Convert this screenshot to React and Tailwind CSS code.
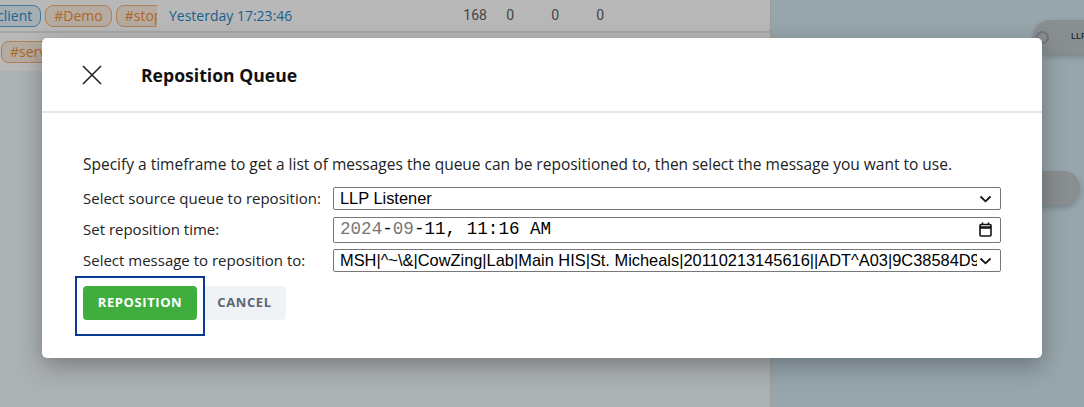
import React from 'react';

const Tag = ({ label, tone }) => (
  <span
    className={`h-[22px] px-[8px] flex items-center rounded-[8px] border text-[14px] leading-none shrink-0 ${
      tone === 'blue'
        ? 'border-[#5aa9d6] text-[#2b8ccc] bg-[#e3f1f9]'
        : 'border-[#f1b27a] text-[#ef8f3a] bg-[#fdeede]'
    }`}
  >
    {label}
  </span>
);

const Chevron = () => (
  <svg width="13" height="8" viewBox="0 0 13 8" fill="none" stroke="#111" strokeWidth="1.8">
    <path d="M1.5 1.5 L6.5 6.3 L11.5 1.5" />
  </svg>
);

const Calendar = () => (
  <svg width="13" height="15" viewBox="0 0 13 15" fill="none" stroke="#111">
    <rect x="1" y="2.5" width="11" height="11.5" rx="1" strokeWidth="1.6" />
    <path d="M1 5.5 H12" strokeWidth="2.4" />
    <path d="M3.5 0.5 V3 M9.5 0.5 V3" strokeWidth="1.6" />
  </svg>
);

const Field = ({ children, h }) => (
  <div
    className={`flex-1 min-w-0 ${h} flex items-center pl-[6px] pr-[8px] border border-[#777] rounded-[2px] bg-white overflow-hidden`}
  >
    {children}
  </div>
);

const App = () => {
  return (
    <div className="relative w-[1084px] h-[407px] overflow-hidden font-['Open_Sans',sans-serif]">
      {/* Background page */}
      <div className="flex h-full">
        <div className="w-[771px] shrink-0 flex flex-col bg-[#eff6f8] border-r border-[#d5dadb]">
          <div className="h-[33px] bg-white flex items-center border-b-2 border-[#e3e6e8]">
            <div className="w-[157px] shrink-0 overflow-hidden">
              <div className="flex items-center gap-[4px] -ml-[12px]">
                <Tag label="client" tone="blue" />
                <Tag label="#Demo" tone="orange" />
                <Tag label="#stopped" tone="orange" />
              </div>
            </div>
            <span className="ml-[12px] text-[14px] text-[#1f86c7] whitespace-nowrap">Yesterday 17:23:46</span>
            <div className="ml-[171px] flex text-[14px] text-[#5c6165] font-['Roboto',sans-serif]">
              <span className="w-[43px]">168</span>
              <span className="w-[45px]">0</span>
              <span className="w-[45px]">0</span>
              <span className="w-[45px]">0</span>
            </div>
          </div>
          <div className="h-[38px] bg-white flex items-center pl-[1px]">
            <Tag label="#server" tone="orange" />
          </div>
        </div>
        <div className="flex-1 min-w-0 overflow-hidden bg-[#d2e6ef] flex flex-col">
          <div className="mt-[20px] ml-[262px] h-[34px] w-[120px] shrink-0 rounded-l-[17px] bg-[#bec5c9] shadow-[0_3px_6px_rgba(0,0,0,0.2)] flex items-center pl-[3px] gap-[22px]">
            <span className="w-[13px] h-[13px] rounded-full border-2 border-[#9aa3a7]" />
            <span className="text-[9px] text-[#222] font-['Liberation_Sans',sans-serif]">LLP</span>
          </div>
          <div className="mt-[117px] ml-[200px] h-[34px] w-[109px] shrink-0 rounded-r-[17px] bg-[#bec5c9] shadow-[0_3px_6px_rgba(0,0,0,0.2)]" />
        </div>
      </div>

      {/* Overlay + modal */}
      <div className="absolute inset-0 bg-black/[0.28] flex justify-center pt-[38px]">
        <div className="w-[1000px] h-[320px] bg-white rounded-[5px] shadow-[0_8px_24px_rgba(0,0,0,0.3)] flex flex-col">
          <div className="h-[75px] flex items-center border-b-2 border-[#e6e6e6] pl-[40px]">
            <svg width="20" height="20" viewBox="0 0 20 20" stroke="#222" strokeWidth="1.6" fill="none">
              <path d="M1 1 L19 19 M19 1 L1 19" />
            </svg>
            <h1 className="ml-[39px] text-[17.6px] font-bold text-[#111] pt-[2px]">Reposition Queue</h1>
          </div>
          <div className="pl-[41px] pr-[41px] pt-[41px] text-[15px] text-[#222]">
            <p className="leading-[20px] text-[15.5px]">
              Specify a timeframe to get a list of messages the queue can be repositioned to, then select the message you want to use.
            </p>
            <div className="mt-[12px] flex flex-col gap-[6px]">
              <div className="flex items-center h-[25px]">
                <span className="w-[250px] shrink-0">Select source queue to reposition:</span>
                <Field h="h-[23px]">
                  <span className="flex-1 text-[16.4px] font-['Liberation_Sans',sans-serif] text-black">LLP Listener</span>
                  <Chevron />
                </Field>
              </div>
              <div className="flex items-center h-[25px]">
                <span className="w-[250px] shrink-0">Set reposition time:</span>
                <Field h="h-[26px]">
                  <span className="flex-1 text-[17.6px] font-['Liberation_Mono',monospace] text-black whitespace-pre">
                    <span className="text-[#777]">2024</span>-<span className="text-[#777]">09</span>-11, 11:16 AM
                  </span>
                  <Calendar />
                </Field>
              </div>
              <div className="flex items-center h-[25px]">
                <span className="w-[250px] shrink-0">Select message to reposition to:</span>
                <Field h="h-[23px]">
                  <span className="flex-1 min-w-0 text-[16.4px] font-['Liberation_Sans',sans-serif] text-black whitespace-nowrap overflow-hidden">
                    MSH|^~\&amp;|CowZing|Lab|Main HIS|St. Micheals|20110213145616||ADT^A03|9C38584D9C38584D
                  </span>
                  <span className="ml-[2px]"><Chevron /></span>
                </Field>
              </div>
            </div>
            <div className="relative mt-[13px] flex gap-[6px]">
              <button className="w-[114px] h-[34px] rounded-[4px] bg-[#3fae3f] text-white text-[13px] font-bold tracking-[0.6px]">
                REPOSITION
              </button>
              <button className="w-[83px] h-[34px] rounded-[4px] bg-[#f0f3f6] text-[#5d6670] text-[13px] font-bold tracking-[0.6px]">
                CANCEL
              </button>
              <div className="absolute -left-[8px] -top-[10px] w-[130px] h-[60px] border-2 border-[#0a3a91]" />
            </div>
          </div>
        </div>
      </div>
    </div>
  );
};

export default App;
